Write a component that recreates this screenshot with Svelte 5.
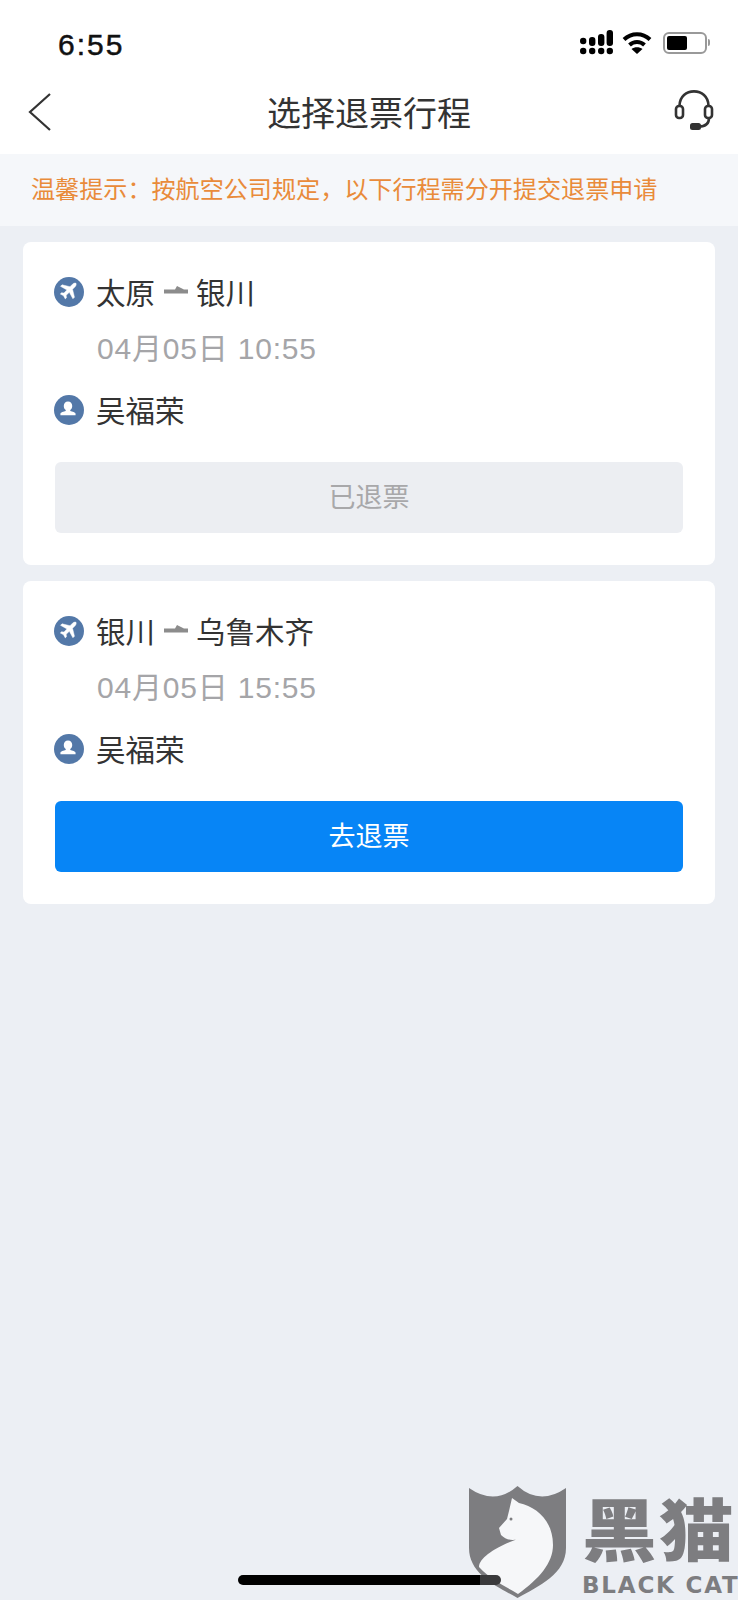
<script>
  const trips = [
    { from: '太原', to: '银川', time: '04月05日 10:55', name: '吴福荣', action: '已退票', active: false },
    { from: '银川', to: '乌鲁木齐', time: '04月05日 15:55', name: '吴福荣', action: '去退票', active: true }
  ];
</script>

<div class="page">
  <header class="top">
    <div class="status">
      <span class="clock">6:55</span>
      <div class="status-icons">
        <svg width="33" height="25" viewBox="0 0 33 25" fill="#000">
          <circle cx="3.2" cy="11" r="3.2"/><circle cx="3.2" cy="21" r="3.2"/>
          <rect x="9" y="7" width="6.400" height="9" rx="3"/><circle cx="12.200" cy="21" r="3.2"/>
          <rect x="18" y="4" width="6.400" height="12" rx="3"/><circle cx="21.200" cy="21" r="3.2"/>
          <rect x="26.600" y="0" width="6.400" height="16" rx="3"/><circle cx="29.800" cy="21" r="3.2"/>
        </svg>
        <svg class="wifi" width="30" height="22" viewBox="0 0 30 22" fill="none" stroke="#000" stroke-width="4">
          <path d="M2 7.500C9.500 .5 20.500 .5 28 7.500"/>
          <path d="M7.500 13C11.800 9 18.200 9 22.500 13"/>
          <path d="M15 22l-5.500-5c3-2.300 8-2.300 11 0z" fill="#000" stroke="none"/>
        </svg>
        <div class="battery"><div class="level"></div></div>
        <div class="nub"></div>
      </div>
    </div>
    <nav class="nav">
      <svg class="back" width="26" height="40" viewBox="0 0 26 40" fill="none" stroke="#333" stroke-width="2.200">
        <path d="M24 2 4 20l20 18"/>
      </svg>
      <h1>选择退票行程</h1>
      <svg class="service" width="42" height="42" viewBox="0 0 42 42" fill="none" stroke="#333" stroke-width="2.600">
        <path d="M6.500 16C6.500 -3.500 35.500 -3.500 35.500 16"/>
        <rect x="3" y="16" width="7" height="12" rx="3"/>
        <rect x="32" y="16" width="7" height="12" rx="3"/>
        <path d="M36 28c0 6-4 8.500-10 8.500"/>
        <rect x="17" y="33" width="11" height="7" rx="2.500" fill="#333" stroke="none"/>
      </svg>
    </nav>
  </header>

  <p class="notice">温馨提示：按航空公司规定，以下行程需分开提交退票申请</p>

  <main class="list">
    {#each trips as t}
      <section class="card">
        <div class="row route">
          <span class="badge">
            <svg width="30" height="30" viewBox="0 0 30 30">
              <circle cx="15" cy="15" r="15" fill="#5378a8"/>
              <path fill="#fff" stroke="#fff" stroke-width=".5" transform="translate(14.500 14.500) scale(.92) translate(-15 -15)" d="M23.400 6.300c-1-.800-2.700-.500-4 .700l-2.800 2.800-8.600-2.100-1.700 1.700 7 3.900-3.200 3.400-2.700-.3-1.300 1.300 3.500 1.900 1.900 3.500 1.300-1.300-.3-2.700 3.400-3.200 3.900 7 1.700-1.700-2.100-8.600 2.800-2.800c1.200-1.300 1.500-3 .7-3.500z"/>
            </svg>
          </span>
          <span class="label">{t.from}</span>
          <svg class="arrow" width="24" height="8" viewBox="0 0 24 8"><path fill="#8c8c8c" d="M0 3.500h24V7.500H0zM11 3.500 13 0l7 3.500z"/></svg>
          <span class="label">{t.to}</span>
        </div>
        <div class="time">{t.time}</div>
        <div class="row person">
          <span class="badge">
            <svg width="30" height="30" viewBox="0 0 30 30">
              <circle cx="15" cy="15" r="15" fill="#5378a8"/>
              <path fill="#fff" transform="translate(14 14) scale(.88) translate(-15 -15)" d="M15 6.500c2.900 0 4.800 2.200 4.800 5 0 2-.9 3.700-2.200 4.700v1.200c2.300.8 6 1.500 6 3.100v1.500H6.400v-1.500c0-1.600 3.700-2.300 6-3.100v-1.200c-1.300-1-2.200-2.700-2.200-4.700 0-2.800 1.900-5 4.800-5z"/>
            </svg>
          </span>
          <span class="label">{t.name}</span>
        </div>
        <button class="action" class:active={t.active}>{t.action}</button>
      </section>
    {/each}
  </main>

  <div class="mark">
    <svg width="97" height="112" viewBox="0 0 97 112">
      <path fill="#7d7d80" d="M0 2Q26 20 48.500 0 71 20 97 2V62C97 88 70 100 48.500 112 27 100 0 88 0 62Z"/>
      <path fill="#f6f7f9" d="M43 12l7 5c18 4 34 18 34 42 0 18-14 34-35 49C36 100 22 94 10 81c0-10 20-22 42-29-6 3-14 3-20-3l-2-7 8-9 2-8z"/>
      <circle cx="42" cy="33" r="1.500" fill="#7d7d80"/>
    </svg>
    <div class="mark-text">
      <div class="mark-cn">黑猫</div>
      <div class="mark-en">BLACK CAT</div>
    </div>
  </div>
  <div class="home"></div>
</div>

<style>
  :global(body) {
    margin: 0;
    background: #ecEff4;
  }
  .page {
    position: relative;
    width: 738px;
    height: 1600px;
    overflow: hidden;
    background: #ecEff4;
    font-family: "Noto Sans CJK SC", "Liberation Sans", sans-serif;
  }
  .top {
    height: 154px;
    background: #fff;
  }
  .status {
    height: 78px;
    padding: 0 28px 0 58px;
    display: flex;
    align-items: flex-end;
    justify-content: space-between;
  }
  .clock {
    font: 400 30px/44px "Liberation Sans", sans-serif;
    letter-spacing: 2px;
    -webkit-text-stroke: 0.5px #111;
    color: #111;
    margin-bottom: 11px;
  }
  .status-icons {
    display: flex;
    align-items: center;
    margin-bottom: 23px;
  }
  .wifi {
    margin-left: 9px;
  }
  .battery {
    width: 44px;
    height: 22px;
    box-sizing: border-box;
    margin-left: 11px;
    padding: 2px;
    border: 2px solid #999;
    border-radius: 6px;
    display: flex;
  }
  .level {
    width: 20px;
    background: #000;
    border-radius: 2px;
  }
  .nub {
    width: 2px;
    height: 7px;
    margin-left: 1px;
    background: #999;
    border-radius: 0 2px 2px 0;
  }
  .nav {
    height: 76px;
    position: relative;
    display: flex;
    align-items: center;
    justify-content: space-between;
    padding: 0 23px 0 26px;
  }
  .nav h1 {
    position: absolute;
    left: 0;
    right: 0;
    top: 11px;
    margin: 0;
    text-align: center;
    font-size: 34px;
    line-height: 46px;
    font-weight: 400;
    color: #333;
  }
  .back, .service {
    position: relative;
  }
  .back { margin-top: -8px; }
  .service { margin-top: -11px; }
  .notice {
    margin: 0;
    height: 72px;
    padding-left: 31px;
    background: #f5f7fa;
    color: #e98b3a;
    font-size: 24.100px;
    line-height: 68px;
    white-space: nowrap;
  }
  .list {
    padding: 16px 23px 0;
    display: flex;
    flex-direction: column;
    gap: 16px;
  }
  .card {
    height: 323px;
    box-sizing: border-box;
    padding: 0 32px;
    background: #fff;
    border-radius: 8px;
  }
  .row {
    display: flex;
    align-items: center;
    font-size: 29.500px;
    line-height: 40px;
    color: #333;
  }
  .label {
    margin-top: -2px;
  }
  .route {
    padding-top: 30px;
    height: 40px;
    box-sizing: content-box;
  }
  .badge {
    width: 30px;
    height: 30px;
    margin: 0 12px 0 -1px;
    display: flex;
    flex: none;
  }
  .arrow {
    margin: 0 8px 4px 9px;
  }
  .time {
    margin: 17px 0 0 42px;
    font: 400 30px/40px "Liberation Sans", "Noto Sans CJK SC", sans-serif;
    letter-spacing: 0.800px;
    color: #a5a5a8;
  }
  .person {
    margin-top: 22px;
  }
  .action {
    display: block;
    width: 100%;
    height: 71px;
    margin-top: 33px;
    border: 0;
    border-radius: 6px;
    background: #ecEef2;
    color: #a8a8aa;
    font: inherit;
    font-size: 27px;
    padding-bottom: 5px;
  }
  .action.active {
    background: #0785f6;
    color: #fff;
  }
  .mark {
    position: absolute;
    left: 469px;
    top: 1486px;
    display: flex;
    gap: 16px;
  }
  .mark-text {
    color: #7d7d80;
    width: 156px;
  }
  .mark-cn {
    font-size: 68px;
    line-height: 80px;
    font-weight: 900;
    letter-spacing: 2px;
    margin-top: 1px;
    white-space: nowrap;
    transform: scaleX(1.1);
    transform-origin: left center;
  }
  .mark-en {
    font: 700 23px/24px "DejaVu Sans", sans-serif;
    letter-spacing: 1.800px;
    white-space: nowrap;
    margin-top: 6px;
  }
  .home {
    position: absolute;
    left: 238px;
    top: 1575px;
    width: 263px;
    height: 10px;
    border-radius: 5px;
    background: linear-gradient(to right, #000 0 92%, #3a3a3c 92%);
  }
</style>
